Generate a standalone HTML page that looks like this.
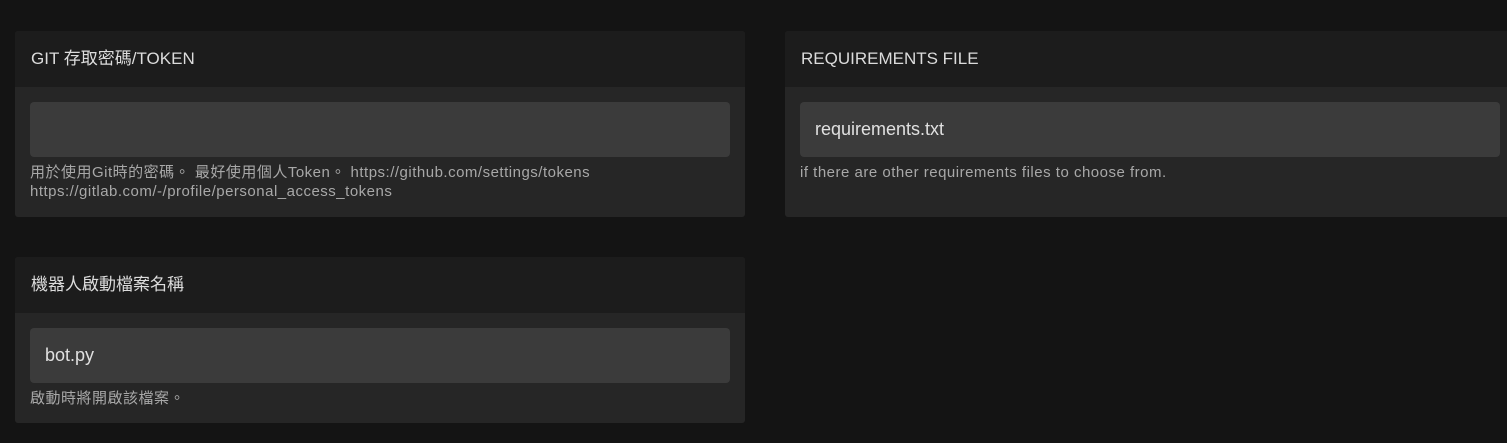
<!DOCTYPE html>
<html><head><meta charset="utf-8"><style>
body{margin:0;width:1507px;height:443px;background:#141414;font-family:"Liberation Sans","Noto Sans CJK TC",sans-serif;overflow:hidden;position:relative}
.card{position:absolute;background:#262626;border-radius:3px;overflow:hidden}
.hd{height:56px;background:#1c1c1c;color:#dcdcdc;font-size:17px;line-height:56px;padding-left:16px}
.inp{margin:15px 15px 0;height:55px;background:#3b3b3b;border-radius:4px;color:#e0e0e0;font-size:18px;line-height:55px;padding-left:15px}
.help{margin:6px 15px 0;color:#a8a8a8;font-size:15px;line-height:19px;letter-spacing:.5px}
</style></head><body>
<div class="card" style="left:15px;top:31px;width:730px;height:186px">
<div class="hd">GIT 存取密碼/TOKEN</div><div class="inp"></div>
<div class="help">用於使用Git時的密碼。 最好使用個人Token。 https://github.com/settings/tokens<br>https://gitlab.com/-/profile/personal_access_tokens</div></div>
<div class="card" style="left:785px;top:31px;width:740px;height:186px">
<div class="hd">REQUIREMENTS FILE</div><div class="inp" style="width:685px">requirements.txt</div>
<div class="help">if there are other requirements files to choose from.</div></div>
<div class="card" style="left:15px;top:257px;width:730px;height:166px">
<div class="hd">機器人啟動檔案名稱</div><div class="inp">bot.py</div>
<div class="help">啟動時將開啟該檔案。</div></div>
</body></html>
